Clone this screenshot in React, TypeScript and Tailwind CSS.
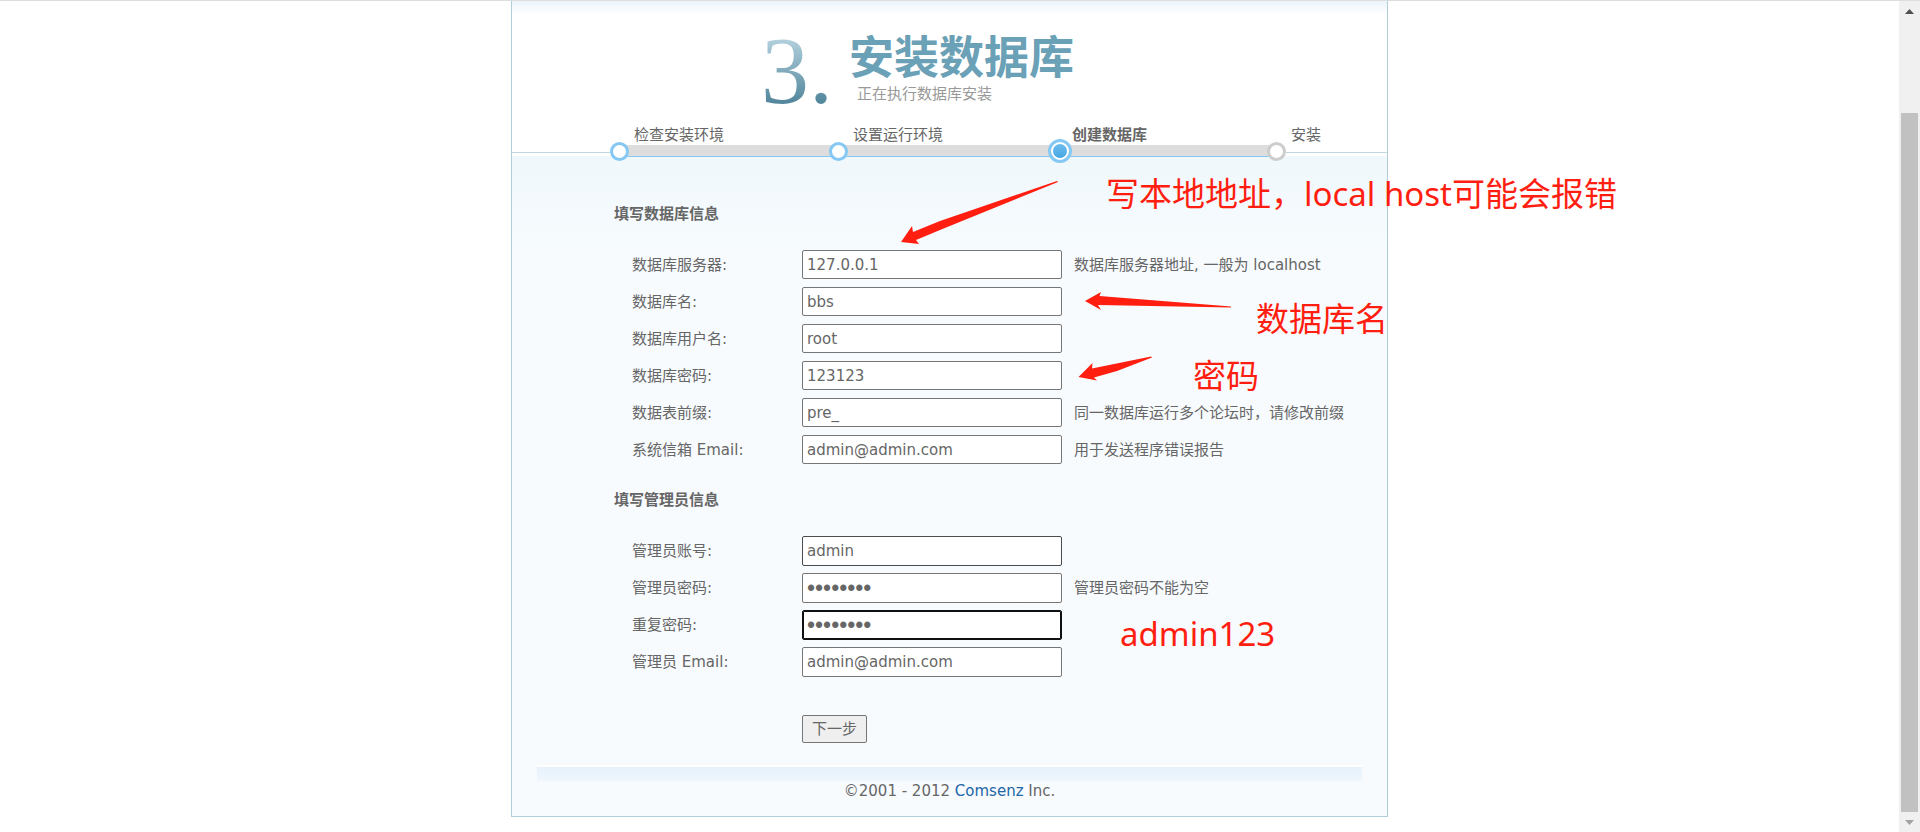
const steps = [
  { label: "检查安装环境", state: "done" },
  { label: "设置运行环境", state: "done" },
  { label: "创建数据库", state: "current" },
  { label: "安装", state: "todo" },
];

type Field = {
  id: string;
  label: string;
  value: string;
  type?: string;
  hint?: string;
  look?: string;
};

const dbFields: Field[] = [
  { id: "dbhost", label: "数据库服务器:", value: "127.0.0.1", hint: "数据库服务器地址, 一般为 localhost" },
  { id: "dbname", label: "数据库名:", value: "bbs" },
  { id: "dbuser", label: "数据库用户名:", value: "root" },
  { id: "dbpw", label: "数据库密码:", value: "123123" },
  { id: "tablepre", label: "数据表前缀:", value: "pre_", hint: "同一数据库运行多个论坛时，请修改前缀" },
  { id: "adminemail", label: "系统信箱 Email:", value: "admin@admin.com", hint: "用于发送程序错误报告" },
];

const adminFields: Field[] = [
  { id: "username", label: "管理员账号:", value: "admin", look: "border-[#4c4c4f]" },
  { id: "password", label: "管理员密码:", value: "admin123", type: "password", hint: "管理员密码不能为空" },
  { id: "password2", label: "重复密码:", value: "admin123", type: "password", look: "border-[#101010] ring-1 ring-inset ring-[#101010]" },
  { id: "email", label: "管理员 Email:", value: "admin@admin.com" },
];

function Dot({ state }: { state: string }) {
  if (state === "current") {
    return (
      <span className="flex size-6 shrink-0 items-center justify-center rounded-full border-[3px] border-[#85c8f3] bg-white">
        <span className="size-[14px] rounded-full bg-gradient-to-b from-[#6cbcee] to-[#45a7e4]" />
      </span>
    );
  }
  return (
    <span
      className={
        state === "done"
          ? "size-[19px] shrink-0 rounded-full border-[3px] border-[#85c8f3] bg-white"
          : "size-[19px] shrink-0 rounded-full border-[3px] border-[#cdcdcd] bg-white"
      }
    />
  );
}

function Stepper() {
  return (
    <div className="relative -mb-px flex items-end">
      <div className="h-[5px] w-[98px] border-t border-[#bfd6de]" />
      <ol className="grid flex-1 grid-cols-[219px_219px_219px_1fr]">
        {steps.map((s) => (
          <li key={s.label}>
            <p className={s.state === "current" ? "pl-6 font-bold" : "pl-6"}>{s.label}</p>
            {s.state === "todo" ? (
              <div className="flex h-3 items-center">
                <Dot state={s.state} />
                <span className="h-[5px] flex-1 self-end border-t border-[#bfd6de]" />
              </div>
            ) : (
              <div className="-mr-[9px] ml-[9px] h-3 border-b border-[#85c8f3] bg-[#ddd]">
                <div className="-ml-[9px] flex h-3 items-center">
                  <Dot state={s.state} />
                </div>
              </div>
            )}
          </li>
        ))}
      </ol>
    </div>
  );
}

function Fields({ title, fields, inputHeight }: { title: string; fields: Field[]; inputHeight: string }) {
  return (
    <fieldset>
      <legend className="pl-[102px] font-bold">{title}</legend>
      <div className="mt-[23px] pl-[120px]">
        {fields.map((f) => (
          <div key={f.id} className="grid h-[37px] grid-cols-[170px_260px_1fr] items-start pt-[3px] leading-[30px]">
            <label htmlFor={f.id}>{f.label}</label>
            <input
              id={f.id}
              type={f.type ?? "text"}
              defaultValue={f.value}
              className={`${inputHeight} w-full rounded-[2px] border bg-white px-1 outline-none ${
                f.type === "password" ? "font-['Liberation_Sans',sans-serif] text-[23px]" : "text-[15px]"
              } ${f.look ?? "border-[#767676]"}`}
            />
            {f.hint && <span className="pl-3 whitespace-nowrap">{f.hint}</span>}
          </div>
        ))}
      </div>
    </fieldset>
  );
}

// Red notes drawn over the form
function Notes() {
  return (
    <div className="pointer-events-none font-['Noto_Sans','Noto_Sans_CJK_SC',sans-serif] text-[33px] leading-10 whitespace-nowrap text-[#ff1e10]">
      <svg className="absolute top-[175px] left-[388px]" width="160" height="70" viewBox="900 176 160 70" fill="currentColor">
        <path d="M901 242 912 226 913 232 940 221 1057 181 1058 182 940 230 916 240 919 244Z" />
      </svg>
      <svg className="absolute top-[289px] left-[572px]" width="150" height="24" viewBox="1084 290 150 24" fill="currentColor">
        <path d="M1085 301 1101 292 1099.500 296 1231 306.500 1231 307.500 1098 305 1101 310Z" />
      </svg>
      <svg className="absolute top-[355px] left-[566px]" width="76" height="28" viewBox="1078 356 76 28" fill="currentColor">
        <path d="M1078.500 377 1092.500 363 1092 368.500 1151 356.500 1152 357.500 1117 371 1094 377.500 1097 380.500Z" />
      </svg>
      <p className="absolute top-[173px] left-[594px]">写本地地址，local host可能会报错</p>
      <p className="absolute top-[298px] left-[744px]">数据库名</p>
      <p className="absolute top-[355px] left-[681px]">密码</p>
      <p className="absolute top-[613px] left-[608px]">admin123</p>
    </div>
  );
}

function Scrollbar() {
  return (
    <aside className="flex w-[21px] shrink-0 flex-col items-center bg-[#f0f0f0]">
      <button type="button" aria-label="向上滚动" className="flex h-[21px] w-full items-center justify-center text-[#505050]">
        <svg width="9" height="5" viewBox="0 0 9 5" fill="currentColor">
          <path d="M0 5 4.500 0 9 5Z" />
        </svg>
      </button>
      <div className="mt-[91px] w-[17px] flex-1 bg-[#c1c1c1]" />
      <button type="button" aria-label="向下滚动" className="flex h-5 w-full items-center justify-center text-[#a3a3a3]">
        <svg width="9" height="5" viewBox="0 0 9 5" fill="currentColor">
          <path d="M0 0h9L4.500 5Z" />
        </svg>
      </button>
    </aside>
  );
}

export default function App() {
  return (
    <div className="flex min-h-screen border-t border-[#ddd] bg-white font-['DejaVu_Sans','Noto_Sans_CJK_SC',sans-serif] text-[15px] leading-5 text-[#666]">
      <main className="flex-1">
        <div className="relative mx-auto max-w-[877px] border-x border-b border-[#b0cdd8]">
          <header className="bg-white">
            <div className="flex h-[124px] bg-gradient-to-b from-[#ebf4fb] to-white to-[14px] pl-[249px]">
              <div className="w-[88px] bg-gradient-to-b from-[#b5d3df] from-[36px] to-[#4c8298] to-[106px] bg-clip-text pt-[22px] font-['Liberation_Serif',serif] text-[96px] leading-[96px] text-transparent">
                3.
              </div>
              <div className="pt-[35px]">
                <h1 className="text-[45px] leading-[45px] font-bold text-[#6ba1b6]">安装数据库</h1>
                <p className="mt-[3px] pl-2 text-[#999]">正在执行数据库安装</p>
              </div>
            </div>
            <Stepper />
          </header>

          <div className="bg-[#f7fbfe] bg-gradient-to-b from-[#f0f8fc] to-[#f7fbfe] to-[100px] pt-12 pb-[15px]">
            <form>
              <Fields title="填写数据库信息" fields={dbFields} inputHeight="h-[29px]" />
              <div className="mt-[21px]">
                <Fields title="填写管理员信息" fields={adminFields} inputHeight="h-[30px]" />
              </div>
              <button
                type="button"
                className="mt-[34px] ml-[290px] block h-7 w-[65px] rounded-[2px] border border-[#767676] bg-[#efefef]"
              >
                下一步
              </button>
            </form>
            <footer className="mx-[25px] mt-[22px] text-center">
              <div className="h-4 border-t-2 border-white bg-gradient-to-b from-[#e5f1fb] to-[#f0f7fd]" />
              ©2001 - 2012{" "}
              <a href="#" className="text-[#2366a8]">
                Comsenz
              </a>{" "}
              Inc.
            </footer>
          </div>

          <Notes />
        </div>
      </main>
      <Scrollbar />
    </div>
  );
}
